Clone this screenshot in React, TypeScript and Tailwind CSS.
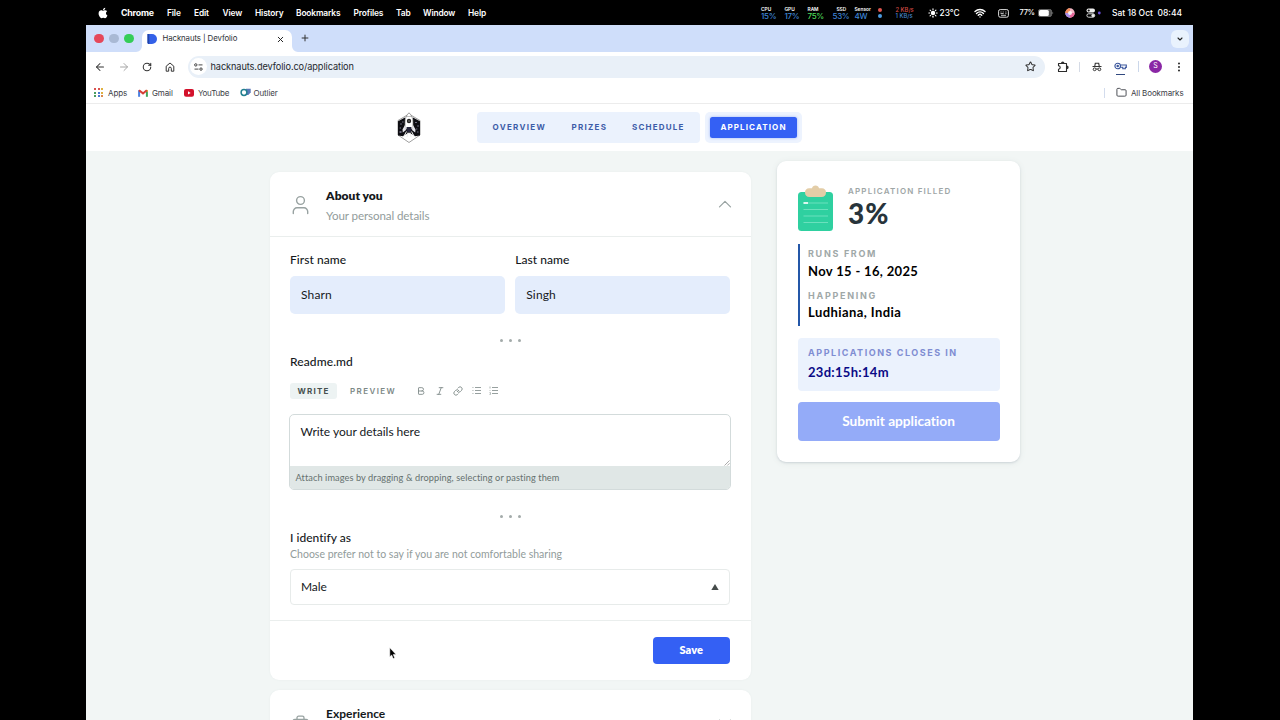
import React from "react";
import {
  ArrowLeft, ArrowRight, RotateCw, Star, Folder, MoreVertical, Wifi, Sun,
  Plus, X, ChevronDown, Bold, Italic,
} from "lucide-react";
import { FaApple } from "react-icons/fa";

const UI = "font-['Inter',sans-serif]";

const menus = [
  { label: "Chrome", cls: "w-[46px] font-bold text-[8.8px] tracking-[-0.2px]" },
  { label: "File", cls: "w-[27px]" },
  { label: "Edit", cls: "w-[28.5px]" },
  { label: "View", cls: "w-[32.5px]" },
  { label: "History", cls: "w-[41px]" },
  { label: "Bookmarks", cls: "w-[57.5px]" },
  { label: "Profiles", cls: "w-[42.5px]" },
  { label: "Tab", cls: "w-[27px]" },
  { label: "Window", cls: "w-[45px]" },
  { label: "Help", cls: "w-[20px]" },
];

const stats = [
  { name: "CPU", value: "15%", cls: "w-[23.5px]", tone: "text-[#3f86d8]" },
  { name: "GPU", value: "17%", cls: "w-[23px]", tone: "text-[#3f86d8]" },
  { name: "RAM", value: "75%", cls: "w-[25px]", tone: "text-[#4fdc5c]" },
  { name: "SSD", value: "53%", cls: "w-[22px]", tone: "text-[#3f86d8]" },
  { name: "Sensor", value: "4W", cls: "w-[23px]", tone: "text-[#3f86d8]" },
];

function MenuBar() {
  return (
    <div className={`${UI} flex h-[25px] shrink-0 items-center bg-black pt-px pl-[98px] text-white`}>
      <FaApple className="mr-[13px] mb-px h-[12px] w-[10px] shrink-0" />
      <div className="flex w-[640px] shrink-0 items-center text-[8.4px] font-semibold tracking-[-0.14px]">
        {menus.map((m) => (
          <span key={m.label} className={`shrink-0 whitespace-nowrap ${m.cls}`}>{m.label}</span>
        ))}
      </div>
      <div className="flex shrink-0 items-center">
        {stats.map((s) => (
          <div key={s.name} className={`flex shrink-0 flex-col whitespace-nowrap ${s.cls}`}>
            <span className={`h-[5px] text-[4.8px] leading-[5px] font-semibold ${s.name === "SSD" ? "pl-[4px]" : ""}`}>{s.name}</span>
            <span className={`h-[8px] text-[8px] leading-[8px] font-medium tracking-[-0.3px] ${s.tone}`}>{s.value}</span>
          </div>
        ))}
        <div className="flex w-[18px] flex-col gap-[2px]">
          <i className="size-[4px] rounded-full bg-[#e0554f]" />
          <i className="size-[4px] rounded-full bg-[#4b9be0]" />
        </div>
        <div className="flex w-[32px] flex-col text-[5.8px] leading-[6px] font-medium whitespace-nowrap">
          <span className="text-[#d04a44]">2 KB/s</span>
          <span className="text-[#4584c8]">1 KB/s</span>
        </div>
        <Sun className="mr-[2px] size-[10px]" strokeWidth={2.6} fill="white" />
        <span className="w-[34px] text-[8.4px] font-medium whitespace-nowrap">23°C</span>
        <Wifi className="mr-[12px] size-[12px]" strokeWidth={2.8} />
        <svg className="mr-[11px] h-[9px] w-[11px]" viewBox="0 0 11 9" fill="none" stroke="#ddd">
          <rect x="0.6" y="0.6" width="9.8" height="7.6" rx="1.6" />
          <path d="M2.5 3h1M4.7 3h1M7.4 3h1M2.5 4.6h3.2M7.4 4.6h1M3 6.3h5" strokeWidth="0.9" />
        </svg>
        <span className="w-[18.5px] text-[7.5px] font-medium tracking-[-0.3px] whitespace-nowrap">77%</span>
        <svg className="mr-[11px] h-[8px] w-[16px]" viewBox="0 0 16 8">
          <rect x="0.4" y="0.4" width="13.2" height="7.2" rx="2" fill="#555" stroke="#888" strokeWidth="0.7" />
          <rect x="1" y="1" width="9.8" height="6" rx="1.5" fill="#fff" />
          <path d="M14.5 2.8v2.4a1.4 1.4 0 0 0 0-2.4z" fill="#888" />
        </svg>
        <svg className="mr-[11px] size-[10px]" viewBox="0 0 10 10">
          <circle cx="5" cy="5" r="4.7" fill="#f3b7c4" />
          <path d="M5 .3A4.7 4.7 0 0 0 .3 5H5z" fill="#f28b5c" />
          <path d="M5 9.7A4.7 4.7 0 0 1 .3 5H5z" fill="#a98be8" />
          <path d="M9.7 5A4.7 4.7 0 0 1 5 9.7V5z" fill="#e5679a" />
          <circle cx="5" cy="5" r="2" fill="#fff" opacity=".85" />
        </svg>
        <svg className="mr-[11px] h-[10px] w-[15px]" viewBox="0 0 15 10">
          <rect x="0.5" y="0.5" width="8.5" height="4" rx="2" fill="#eee" />
          <circle cx="2.7" cy="2.5" r="1.1" fill="#111" />
          <rect x="0.9" y="5.8" width="7.8" height="3.4" rx="1.7" fill="none" stroke="#eee" strokeWidth="0.9" />
          <circle cx="7" cy="7.5" r="1.6" fill="#eee" />
          <circle cx="13.3" cy="5" r="1.4" fill="#6b4fd8" />
        </svg>
        <span className="text-[8.5px] font-medium whitespace-pre">Sat 18 Oct  08:44</span>
      </div>
    </div>
  );
}

function TabStrip() {
  return (
    <div className="flex h-[26.5px] shrink-0 items-end bg-[#cfdefa] pl-[8px]">
      <div className="mb-[8.5px] flex w-[41.5px] shrink-0 gap-[5.5px]">
        <i className="size-[9.5px] shrink-0 rounded-full bg-[#e5485a]" />
        <i className="size-[9.5px] shrink-0 rounded-full bg-[#a9b9d4]" />
        <i className="size-[9.5px] shrink-0 rounded-full bg-[#35cd57]" />
      </div>
      <svg className="size-[6px] shrink-0" viewBox="0 0 6 6"><path d="M6 0v6H0a6 6 0 0 0 6-6z" fill="#fff" /></svg>
      <div className="flex h-[22px] w-[150px] shrink-0 items-center rounded-t-[7px] bg-white pr-[7px] pb-[3px] pl-[5px]">
        <svg className="mr-[6px] size-[10px] shrink-0" viewBox="0 0 10 10">
          <path d="M.5 0H5a5 5 0 0 1 0 10H2A1.5 1.5 0 0 1 .5 8.5z" fill="#3461e8" />
          <path d="M.5 0h1.8v10H2A1.5 1.5 0 0 1 .5 8.5z" fill="#2144a8" />
        </svg>
        <span className="flex-1 text-[7.8px] tracking-[-0.08px] whitespace-nowrap text-[#2c3036]">Hacknauts | Devfolio</span>
        <X className="size-[9px]" strokeWidth={2.6} color="#222" />
      </div>
      <svg className="size-[6px] shrink-0" viewBox="0 0 6 6"><path d="M0 0v6h6a6 6 0 0 1-6-6z" fill="#fff" /></svg>
      <Plus className="mb-[8.5px] ml-[2px] size-[10px] shrink-0" strokeWidth={2.4} color="#333" />
      <div className="mr-[4px] mb-[4px] ml-auto grid size-[18px] place-items-center rounded-[6px] bg-[#e9f2fd]">
        <ChevronDown className="size-[8px]" strokeWidth={3.2} color="#222" />
      </div>
    </div>
  );
}

function Toolbar() {
  return (
    <div className="flex h-[30px] shrink-0 items-center bg-white pl-[8px] text-[#333]">
      <ArrowLeft className="mr-[12px] size-[12px] shrink-0" strokeWidth={2.1} />
      <ArrowRight className="mr-[12px] size-[12px] shrink-0" strokeWidth={2} color="#a6a6a6" />
      <RotateCw className="mr-[13px] size-[10px] shrink-0" strokeWidth={2.5} />
      <svg className="mr-[12.5px] size-[10px] shrink-0" viewBox="0 0 10 10" fill="none" stroke="#333" strokeLinejoin="round">
        <path d="M1.2 4.2 5 1l3.8 3.2v5H6.3V6.4a1.3 1.3 0 0 0-2.6 0v2.8H1.2z" />
      </svg>
      <div className="flex h-[22px] w-[857px] shrink-0 items-center rounded-full bg-[#e9f0f8] pr-[9px] pl-[2px]">
        <div className="mr-[3.5px] grid size-[17.5px] place-items-center rounded-full bg-white">
          <svg className="h-[8px] w-[9px]" viewBox="0 0 9 8" fill="none" stroke="#333" strokeWidth=".9">
            <circle cx="1.8" cy="1.9" r="1.2" />
            <path d="M4.5 1.9h4M.5 6.1h4" />
            <circle cx="7" cy="6.1" r="1.2" />
          </svg>
        </div>
        <span className="flex-1 pt-px text-[9.2px] tracking-[-0.09px] text-[#24282e]">hacknauts.devfolio.co/application</span>
        <Star className="size-[11px]" strokeWidth={2.2} />
      </div>
      <svg className="ml-[12px] size-[12px] shrink-0" viewBox="0 0 12 12" fill="none" stroke="#2b2b2b" strokeWidth="1.1" strokeLinejoin="round">
        <path d="M1.5 2.5h8v8h-8V8.2a1.7 1.7 0 0 0 0-3.4z" />
        <path d="M4.7 2.2a1 1 0 0 1 2 0M9.8 5.2a1 1 0 0 1 0 2.2" strokeWidth="1.5" />
      </svg>
      <i className="ml-[10.5px] h-[10px] w-px shrink-0 bg-[#d5dbe6]" />
      <svg className="ml-[11.5px] size-[10px] shrink-0" viewBox="0 0 10 10" fill="none" stroke="#333">
        <path d="M2.8 4 3.3 1.3h3.4L7.2 4M.5 4.5h9" strokeWidth="1.1" />
        <circle cx="2.6" cy="7.3" r="1.4" />
        <circle cx="7.4" cy="7.3" r="1.4" />
        <path d="M4 7h2" />
      </svg>
      <div className="mt-[4px] ml-[12.5px] flex w-[13px] shrink-0 flex-col items-center gap-[3.5px]">
        <svg className="h-[8px] w-[13px]" viewBox="0 0 13 8" fill="none" stroke="#3a569c" strokeWidth="1.1">
          <circle cx="3.7" cy="4" r="2.8" />
          <circle cx="3.7" cy="4" r=".7" fill="#3a569c" />
          <path d="M6.5 3h5.8v2.4h-1v1.3H8.8V5.2H6.3" />
        </svg>
        <i className="h-px w-[9px] bg-[#30487f]" />
      </div>
      <i className="ml-[10.5px] h-[11px] w-px shrink-0 bg-[#cbd7ea]" />
      <span className="ml-[10.5px] grid size-[13px] shrink-0 place-items-center rounded-full bg-[#8a27a5] text-[7px] text-white">S</span>
      <MoreVertical className="ml-[11px] size-[12px] shrink-0" strokeWidth={2.2} />
    </div>
  );
}

const appDots = ["#d9534f", "#d9534f", "#e0b040", "#4a9d5f", "#4a78d0", "#e0b040", "#4a9d5f", "#4a78d0", "#d9894f"];

function BookmarksBar() {
  return (
    <div className="flex h-[22.5px] shrink-0 items-center border-b border-[#ececec] bg-white pt-px pl-[8px] text-[8px] tracking-[-0.12px] whitespace-nowrap text-[#3c4046]">
      <div className="grid w-[9px] shrink-0 grid-cols-3 gap-[1.5px]">
        {appDots.map((c, i) => (
          <i key={i} className="size-[2px]" style={{ background: c }} />
        ))}
      </div>
      <span className="ml-[5px] w-[30px]">Apps</span>
      <svg className="h-[8px] w-[10px] shrink-0" viewBox="0 0 10 8" fill="none" strokeWidth="2">
        <path d="M1.1 1.2V7.8" stroke="#4a7fe0" />
        <path d="M8.9 1.2V7.8" stroke="#3fa55b" />
        <path d="M8.3 1.5 9.8 2.4" stroke="#e8b43a" />
        <path d="M1 1.2 5 4.4 8.8 1.2" stroke="#d63f35" />
      </svg>
      <span className="ml-[4px] w-[32px]">Gmail</span>
      <svg className="h-[8px] w-[10px] shrink-0" viewBox="0 0 10 8">
        <rect width="10" height="7.8" rx="2" fill="#d3112b" />
        <path d="M4 2.3v3.2l2.7-1.6z" fill="#fff" />
      </svg>
      <span className="ml-[4px] w-[41.5px] tracking-[-0.25px]">YouTube</span>
      <svg className="h-[9px] w-[11px] shrink-0" viewBox="0 0 11 9">
        <path d="M6 .8h4.7v3.8L8.3 6.9H6z" fill="#5a78b8" />
        <circle cx="4" cy="4.5" r="2.9" fill="#fff" stroke="#227f8f" strokeWidth="1.5" />
      </svg>
      <span className="ml-[3px]">Outlier</span>
      <i className="ml-auto h-[10px] w-px bg-[#d3dced]" />
      <Folder className="mr-[4px] ml-[11px] size-[11px]" strokeWidth={2} />
      <span className="mr-[9.5px]">All Bookmarks</span>
    </div>
  );
}

function RocketLogo() {
  return (
    <svg className="h-[32px] w-[26px] shrink-0" viewBox="0 0 26 32">
      <path d="M13 2 24 8.5V23L13 30.5 2 23V8.5z" fill="#fff" stroke="#888" strokeWidth=".8" />
      <path d="M2 9.2 9 5.5v11L13 18l4-1.5v-11l7 3.7V23.5l-5 .8-2-1.5-4-2-4 2-2 1.5-5-.8z" fill="#0d0d12" />
      <path d="M13 .8c3 2.5 4 6 4 10v6H9v-6c0-4 1-7.5 4-10z" fill="#fff" stroke="#777" strokeWidth=".7" />
      <path d="M10 4.5h6" stroke="#999" strokeWidth=".6" />
      <circle cx="13" cy="9" r="2.2" fill="#222" />
      <circle cx="13" cy="9" r=".7" fill="#999" />
      <path d="M9 13 6.5 17.5 6.8 20.5l3.2-2.5M17 13l2.5 4.5-.3 3-3.2-2.5" fill="#e4e4ea" />
      <path d="M10.5 15h5l-.8 5h-3.4z" fill="#24243a" />
      <path d="M10.5 19.5 7.5 25M12 20.5 11 25M14 20.5l1 4.5M15.5 19.5l3 5.5" stroke="#eee" strokeWidth="1" />
      <path d="M4.5 12h1M6.5 10h.8M19.5 10.5h1M21.5 14h1M3.8 16h.8M20.5 17h.7M3.5 20h2M21.5 20h.8" stroke="#c9c6e8" strokeWidth="1" />
    </svg>
  );
}

function SiteHeader() {
  return (
    <div className={`${UI} flex h-[47px] shrink-0 items-center bg-white pl-[310px] text-[8px] font-bold text-[#3c5ca8]`}>
      <RocketLogo />
      <div className="ml-[55px] flex h-[31px] w-[222.5px] shrink-0 items-center rounded-[4px] bg-[#ebf2fd] pb-px pl-[15.5px] whitespace-nowrap">
        <span className="w-[79px] tracking-[1.3px]">OVERVIEW</span>
        <span className="w-[60.5px] tracking-[1.28px]">PRIZES</span>
        <span className="tracking-[1.2px]">SCHEDULE</span>
      </div>
      <div className="ml-[5.5px] flex h-[31px] w-[97px] shrink-0 items-center justify-center rounded-[5px] bg-[#edf3fe]">
        <div className="flex h-[21px] w-[87px] items-center justify-center rounded-[2.5px] bg-[#3460f4] pb-px tracking-[1.12px] text-white shadow-[0_0_3px_#9db6f8]">APPLICATION</div>
      </div>
    </div>
  );
}

function Dots() {
  return (
    <div className="flex h-[10px] shrink-0 items-center justify-center gap-[6px]">
      <i className="size-[3px] rounded-full bg-[#a3abaa]" />
      <i className="size-[3px] rounded-full bg-[#a3abaa]" />
      <i className="size-[3px] rounded-full bg-[#a3abaa]" />
    </div>
  );
}

function Field({ label, value }: { label: string; value: string }) {
  return (
    <div className="flex flex-1 flex-col">
      <label className="h-[20px] leading-[20px] font-medium tracking-[0.05px]">{label}</label>
      <div className="mt-[6px] h-[37.5px] rounded-[5px] bg-[#e4edfc] pl-[11px] leading-[37px] tracking-[0.15px]">{value}</div>
    </div>
  );
}

function ListIcon({ numbered }: { numbered?: boolean }) {
  return (
    <svg className="h-[9px] w-[9px]" viewBox="0 0 9 9" fill="none" stroke="#8b9594" strokeWidth="0.9">
      <path d="M3 1.5h6M3 4.5h6M3 7.5h6" />
      <path d={numbered ? "M1 .5v2M.6 4.5h.8M.6 6.5h.8v2h-.8" : "M.4 1.5h1.1M.4 4.5h1.1M.4 7.5h1.1"} strokeWidth=".7" />
    </svg>
  );
}

function AboutCard() {
  return (
    <section className="flex h-[507.5px] w-[481px] shrink-0 flex-col rounded-[9px] bg-white shadow-[0_0_2px_#e6eceb]">
      <header className="flex h-[65px] shrink-0 items-center border-b border-[#eaeeed] pr-[18.5px] pl-[20px]">
        <svg className="mt-[2px] mr-[15.6px] size-[21px]" viewBox="0 0 21 21" fill="none" stroke="#98a2a1" strokeWidth="1.4" strokeLinecap="round">
          <circle cx="10.5" cy="5.5" r="3.9" />
          <path d="M3.3 18.500V16.500a3.700 3.700 0 0 1 3.700-3.700h7a3.700 3.700 0 0 1 3.700 3.700v2" />
        </svg>
        <div className="flex-1">
          <h2 className="h-[19px] leading-[20px] font-extrabold tracking-[0.02px]">About you</h2>
          <p className="h-[18px] text-[11.6px] leading-[21px] tracking-[-0.1px] text-[#929c9b]">Your personal details</p>
        </div>
        <svg className="h-[8px] w-[14px]" viewBox="0 0 14 8" fill="none" stroke="#98a2a1" strokeWidth="1.2" strokeLinecap="round" strokeLinejoin="round">
          <path d="M1.5 6.8 7 1.3l5.5 5.5" />
        </svg>
      </header>
      <div className="flex h-[384px] shrink-0 flex-col border-b border-[#eaeeed] px-[20.5px] pt-[13px]">
        <div className="flex gap-[10.5px]">
          <Field label="First name" value="Sharn" />
          <Field label="Last name" value="Singh" />
        </div>
        <div className="mt-[22px]"><Dots /></div>
        <label className="mt-[6.5px] h-[20px] leading-[19px] font-medium tracking-[0.1px]">Readme.md</label>
        <div className={`${UI} mt-[11px] flex h-[15.5px] shrink-0 items-center text-[8px] text-[#7c8886]`}>
          <span className="grid h-[15.5px] w-[47px] place-items-center rounded-[3px] bg-[#edf3f3] font-bold tracking-[1.2px] text-[#46504f]">WRITE</span>
          <span className="ml-[13px] w-[66px] font-semibold tracking-[1.4px]">PREVIEW</span>
          <div className="flex items-center gap-[8.5px]">
            <Bold className="size-[10px]" strokeWidth={2.1} />
            <Italic className="size-[10px]" strokeWidth={2.1} />
            <svg className="size-[10px]" viewBox="0 0 24 24" fill="none" stroke="#7c8886" strokeWidth="2.2" strokeLinecap="round">
              <path d="M10 13a5 5 0 0 0 7.54.54l3-3a5 5 0 0 0-7.07-7.07l-1.72 1.71" />
              <path d="M14 11a5 5 0 0 0-7.54-.54l-3 3a5 5 0 0 0 7.07 7.07l1.71-1.71" />
            </svg>
            <ListIcon />
            <ListIcon numbered />
          </div>
        </div>
        <div className="mt-[15px] -ml-px flex h-[76px] w-[442px] shrink-0 flex-col overflow-hidden rounded-[5px] border border-[#d3dbdb]">
          <div className="flex flex-1 justify-between pl-[10.5px]">
            <span className="pt-[7.5px] leading-[20px] tracking-[-0.02px]">Write your details here</span>
            <svg className="size-[6px] self-end" viewBox="0 0 6 6" stroke="#888" strokeWidth=".7">
              <path d="M.5 5.5 5.5.5M3.3 5.5 5.5 3.3" />
            </svg>
          </div>
          <div className="h-[23px] bg-[#e0e7e6] pl-[5.5px] text-[9.2px] leading-[24px] tracking-[0.09px] text-[#66716f]">
            Attach images by dragging &amp; dropping, selecting or pasting them
          </div>
        </div>
        <div className="mt-[21.5px]"><Dots /></div>
        <label className="mt-[8px] h-[18px] leading-[18px] font-medium tracking-[0.01px]">I identify as</label>
        <p className="h-[14px] text-[10.5px] leading-[14px] tracking-[0.02px] text-[#929c9b]">Choose prefer not to say if you are not comfortable sharing</p>
        <div className="mt-[7.5px] flex h-[36px] shrink-0 items-center justify-between rounded-[4px] border border-[#e7ebea] pr-[10.5px] pl-[10px]">
          <span className="h-[15px] leading-[15px] tracking-[-0.1px]">Male</span>
          <svg className="h-[6px] w-[8px]" viewBox="0 0 8 6"><path d="M4 0 7.7 6H.3z" fill="#454b4a" /></svg>
        </div>
      </div>
      <footer className="flex h-[58.5px] shrink-0 items-center justify-end pr-[20.5px]">
        <button className="h-[27.5px] w-[77.5px] rounded-[4px] bg-[#3460f4] text-[11px] font-extrabold tracking-[0.09px] text-white">Save</button>
      </footer>
    </section>
  );
}

function Clipboard() {
  return (
    <svg className="h-[47px] w-[36px] shrink-0" viewBox="0 0 36 47">
      <rect x="0" y="7" width="35" height="39" rx="3.5" fill="#2fd0a0" />
      <path d="M5.5 18H30M5.5 24.5H30M5.5 31H30M5.5 37.5H30" stroke="#6be0bd" strokeWidth="1" />
      <path d="M5.5 18h4.5" stroke="#fff" strokeWidth="1.6" />
      <path d="M11 3.3h3a3.6 3.6 0 0 1 7 0h3a4 4 0 0 1 4 4.2 4.6 4.6 0 0 1-4.5 4.5h-12A4.6 4.6 0 0 1 7 7.5a4 4 0 0 1 4-4.2z" fill="#e3cda7" />
    </svg>
  );
}

function SummaryCard() {
  return (
    <aside className="ml-[26.5px] flex h-[300.5px] w-[243px] shrink-0 flex-col rounded-[9px] bg-white px-[20.5px] pt-[23.5px] shadow-[0_1px_2px_#cfd6da,0_1px_6px_#e2e8e7]">
      <div className="flex h-[47px] shrink-0">
        <Clipboard />
        <div className="ml-[14.5px]">
          <p className={`${UI} h-[11px] text-[8px] leading-[12px] font-semibold tracking-[1.19px] whitespace-nowrap text-[#9ea6a6]`}>APPLICATION FILLED</p>
          <p className="h-[30px] text-[28px] leading-[34px] font-black tracking-[1px] text-[#28343b]">3%</p>
        </div>
      </div>
      <div className="mt-[12.5px] flex h-[82px] shrink-0 flex-col border-l-2 border-[#2457a8] pl-[8.5px] text-[13px] font-bold whitespace-nowrap text-black">
        <p className={`${UI} mt-[4px] h-[12px] text-[9px] leading-[12px] tracking-[1.7px] text-[#a0a8a8]`}>RUNS FROM</p>
        <p className="mt-[3px] h-[16px] leading-[16px] tracking-[0.34px]">Nov 15 - 16, 2025</p>
        <p className={`${UI} mt-[10.5px] h-[12px] text-[9px] leading-[12px] tracking-[1.72px] text-[#a0a8a8]`}>HAPPENING</p>
        <p className="mt-[2.5px] h-[16px] leading-[16.5px] tracking-[0.43px]">Ludhiana, India</p>
      </div>
      <div className="mt-[11.5px] flex h-[53.5px] shrink-0 flex-col rounded-[4px] bg-[#ebf2fd] pt-[9.5px] pl-[10.5px] font-bold">
        <p className={`${UI} h-[12px] text-[9px] leading-[12px] tracking-[1.54px] whitespace-nowrap text-[#7f8dd2]`}>APPLICATIONS CLOSES IN</p>
        <p className="mt-[5px] h-[16px] text-[13px] leading-[16px] tracking-[0.3px] text-[#0a0a86]">23d:15h:14m</p>
      </div>
      <div className="mt-[11px] grid h-[38.5px] shrink-0 place-items-center rounded-[4px] bg-[#94abf8] text-[13.7px] font-bold tracking-[-0.03px] text-white">Submit application</div>
    </aside>
  );
}

function ExperienceCard() {
  return (
    <section className="mt-[10.5px] flex h-[65px] w-[481px] shrink-0 rounded-[9px] bg-white pt-[13.5px] pr-[18.5px] pl-[20px] shadow-[0_0_2px_#e6eceb]">
      <svg className="mt-[11.5px] mr-[15.6px] size-[21px] shrink-0" viewBox="0 0 21 21" fill="none" stroke="#98a2a1" strokeWidth="1.3" strokeLinejoin="round">
        <rect x="3" y="4.5" width="15" height="12" rx="2" />
        <path d="M7 4.5V2.8a1.6 1.6 0 0 1 1.6-1.6h3.8A1.6 1.6 0 0 1 14 2.8v1.7" />
      </svg>
      <h2 className="h-[19px] flex-1 leading-[19px] font-bold">Experience</h2>
      <svg className="mt-[15px] h-[8px] w-[14px]" viewBox="0 0 14 8" fill="none" stroke="#98a2a1" strokeWidth="1.2" strokeLinecap="round" strokeLinejoin="round">
        <path d="M1.5 1.2 7 6.7l5.5-5.5" />
      </svg>
    </section>
  );
}

function Cursor() {
  return (
    <svg className="absolute top-[647px] left-[389px] h-[13px] w-[8px]" viewBox="0 0 8 13">
      <path d="M.8.8V9.8L2.7 8l1.5 3.6 1.5-.7L4.2 7.5H7z" fill="#000" stroke="#fff" strokeWidth=".5" />
    </svg>
  );
}

export default function App() {
  return (
    <div className="relative flex h-[720px] w-[1280px] flex-col overflow-hidden bg-black">
      <MenuBar />
      <div className="ml-[86px] flex h-[695px] w-[1107px] shrink-0 flex-col overflow-hidden bg-[#f2f6f5]">
        <div className={`${UI} flex shrink-0 flex-col`}>
          <TabStrip />
          <Toolbar />
          <BookmarksBar />
        </div>
        <SiteHeader />
        <main className="flex items-start pl-[183.5px] font-['Lato',sans-serif] text-[12px] text-[#15191c]">
          <div className="flex flex-col pt-[21px]">
            <AboutCard />
            <ExperienceCard />
          </div>
          <div className="pt-[10px]"><SummaryCard /></div>
        </main>
      </div>
      <Cursor />
    </div>
  );
}
